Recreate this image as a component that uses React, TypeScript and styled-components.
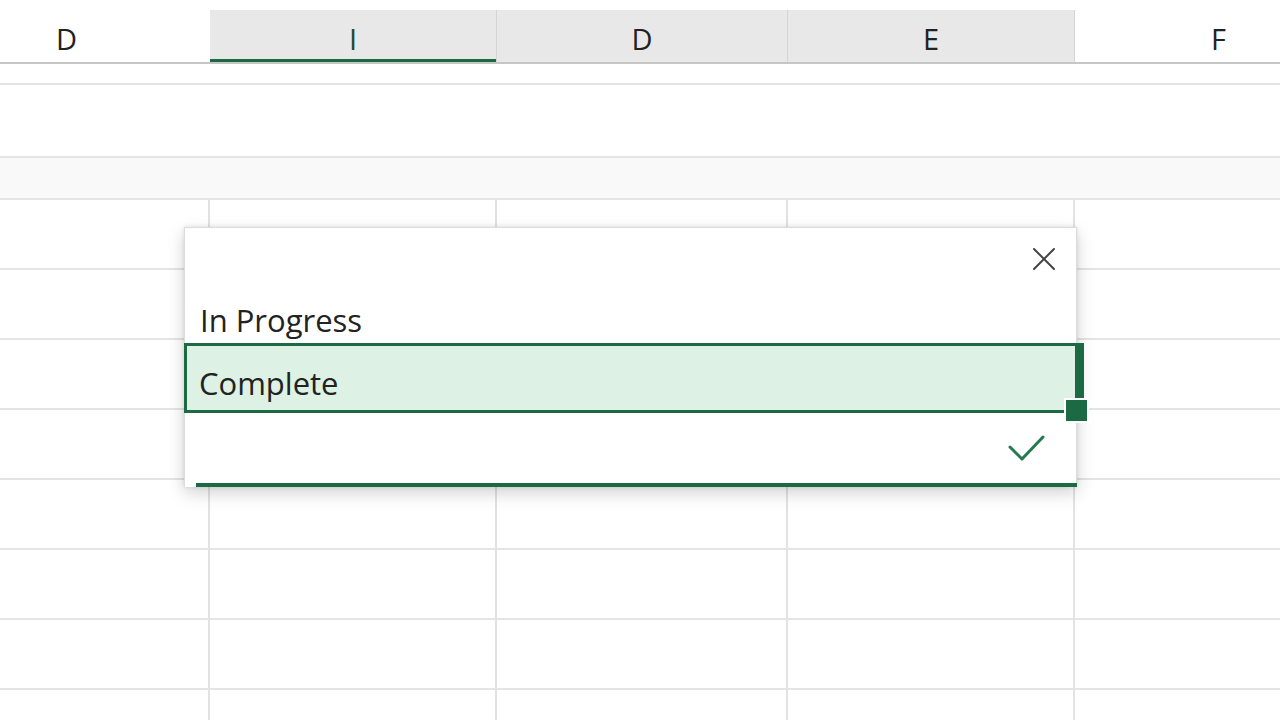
import React from 'react';
import styled, { createGlobalStyle } from 'styled-components';

const GlobalStyle = createGlobalStyle`
  html, body {
    margin: 0;
    padding: 0;
    background: #fff;
    overflow: hidden;
  }
  body {
    font-family: 'Open Sans', 'Noto Sans', sans-serif;
    color: #222;
  }
`;

const GREEN = '#1b6a43';
const COLS = '287px 287px 291px 287px 287px';

const Page = styled.div`
  position: relative;
  width: 1280px;
  height: 720px;
  overflow: hidden;
`;

const Sheet = styled.div`
  display: flex;
  flex-direction: column;
  width: 1439px;
  margin-left: -77px;
`;

const HeaderRow = styled.div`
  display: grid;
  grid-template-columns: ${COLS};
  height: 62px;
  border-bottom: 2px solid #c6c6c6;
`;

const HeaderCell = styled.div<{ $shaded?: boolean; $selected?: boolean }>`
  display: flex;
  align-items: center;
  justify-content: center;
  margin-top: 10px;
  padding-top: 5px;
  font-size: 29px;
  font-weight: 500;
  color: ${(p) => (p.$selected ? '#1d4a33' : '#222')};
  background: ${(p) => (p.$shaded ? '#e8e8e8' : '#fff')};
  border-right: ${(p) => (p.$shaded ? '1px solid #d4d4d4' : 'none')};
  box-shadow: ${(p) => (p.$selected ? `inset 0 -3px 0 ${GREEN}` : 'none')};
`;

const BandRow = styled.div<{ $h: number; $tint?: boolean }>`
  height: ${(p) => p.$h}px;
  background: ${(p) => (p.$tint ? '#f9f9f9' : '#fff')};
  border-bottom: 2px solid #e4e4e4;
`;

const GridRow = styled.div`
  display: grid;
  grid-template-columns: ${COLS};
  height: 70px;
`;

const Cell = styled.div`
  border-right: 2px solid #e2e2e2;
  border-bottom: 2px solid #e4e4e4;
`;

const Popup = styled.div`
  position: absolute;
  left: 184px;
  top: 227px;
  width: 891px;
  display: flex;
  flex-direction: column;
  background: #fff;
  border: 1px solid #dcdcdc;
  border-bottom: none;
  box-shadow: 0 6px 16px rgba(0, 0, 0, 0.18), 0 0 4px rgba(0, 0, 0, 0.1);
`;

const TopBar = styled.div`
  display: flex;
  justify-content: flex-end;
  align-items: center;
  height: 61px;
  padding-right: 20px;
`;

const Option = styled.div<{ $selected?: boolean }>`
  position: relative;
  display: flex;
  align-items: center;
  box-sizing: border-box;
  font-size: 31px;
  font-weight: 500;
  color: #222;
  ${(p) =>
    p.$selected
      ? `
    height: 70px;
    padding: 9px 0 0 12px;
    margin-left: -1px;
    margin-right: -8px;
    background: #ddf1e4;
    border: 3px solid ${GREEN};
    border-right-width: 9px;
  `
      : `
    height: 54px;
    padding: 8px 0 0 15px;
  `}
`;

const FillHandle = styled.span`
  position: absolute;
  right: -14px;
  bottom: -13px;
  width: 21px;
  height: 21px;
  background: ${GREEN};
  border: 2px solid #fff;
`;

const Footer = styled.div`
  display: flex;
  justify-content: flex-end;
  align-items: center;
  height: 70px;
  padding-right: 31px;
`;

const BottomBar = styled.div`
  height: 4px;
  margin-left: 11px;
  margin-right: -1px;
  background: ${GREEN};
`;

const headers = [
  { label: 'D' },
  { label: 'I', shaded: true, selected: true },
  { label: 'D', shaded: true },
  { label: 'E', shaded: true },
  { label: 'F' },
];

const CloseIcon = () => (
  <svg width="24" height="24" viewBox="0 0 24 24" fill="none">
    <path d="M2 2 22 22M22 2 2 22" stroke="#444" strokeWidth="2" strokeLinecap="round" />
  </svg>
);

const CheckIcon = () => (
  <svg width="37" height="28" viewBox="0 0 37 28" fill="none">
    <path d="M2 13 14 25 35 3" stroke="#247a4c" strokeWidth="3" strokeLinecap="round" strokeLinejoin="round" />
  </svg>
);

const App = () => {
  return (
    <Page>
      <GlobalStyle />
      <Sheet>
        <HeaderRow>
          {headers.map((h, i) => (
            <HeaderCell key={i} $shaded={h.shaded} $selected={h.selected}>
              {h.label}
            </HeaderCell>
          ))}
        </HeaderRow>
        <BandRow $h={19} />
        <BandRow $h={71} />
        <BandRow $h={40} $tint />
        {Array.from({ length: 8 }).map((_, r) => (
          <GridRow key={r}>
            {headers.map((_, c) => (
              <Cell key={c} />
            ))}
          </GridRow>
        ))}
      </Sheet>

      <Popup>
        <TopBar>
          <CloseIcon />
        </TopBar>
        <Option>In Progress</Option>
        <Option $selected>
          Complete
          <FillHandle />
        </Option>
        <Footer>
          <CheckIcon />
        </Footer>
        <BottomBar />
      </Popup>
    </Page>
  );
};

export default App;
